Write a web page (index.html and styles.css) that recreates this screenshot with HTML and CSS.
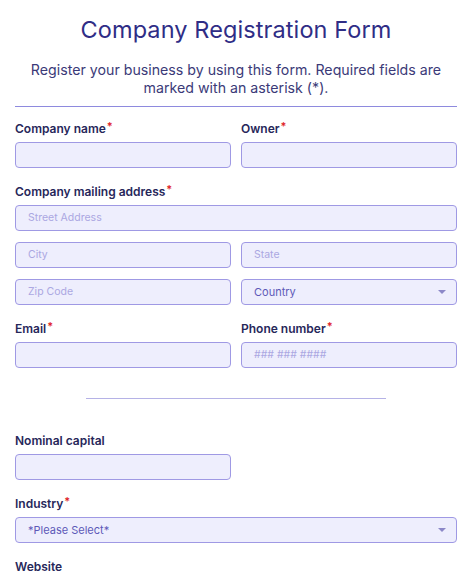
FILE: index.html
```
<!DOCTYPE html>
<html>
<head>
<meta charset="utf-8">
<link rel="stylesheet" href="styles.css">
</head>
<body>
<div class="form">
  <h1 class="title">Company Registration Form</h1>
  <p class="subtitle">Register your business by using this form. Required fields are marked with an asterisk (*).</p>
  <hr class="rule">
  <div class="row two">
    <div class="field">
      <div class="label">Company name<span class="req">*</span></div>
      <div class="input"></div>
    </div>
    <div class="field">
      <div class="label">Owner<span class="req">*</span></div>
      <div class="input"></div>
    </div>
  </div>
  <div class="field">
    <div class="label">Company mailing address<span class="req">*</span></div>
    <div class="address">
      <div class="input ph">Street Address</div>
      <div class="pair">
        <div class="input ph">City</div>
        <div class="input ph">State</div>
      </div>
      <div class="pair">
        <div class="input ph">Zip Code</div>
        <div class="input select">Country<span class="caret"></span></div>
      </div>
    </div>
  </div>
  <div class="row two">
    <div class="field">
      <div class="label">Email<span class="req">*</span></div>
      <div class="input"></div>
    </div>
    <div class="field">
      <div class="label">Phone number<span class="req">*</span></div>
      <div class="input ph">### ### ####</div>
    </div>
  </div>
  <hr class="rule short">
  <div class="row two">
    <div class="field">
      <div class="label">Nominal capital</div>
      <div class="input"></div>
    </div>
  </div>
  <div class="field">
    <div class="label">Industry<span class="req">*</span></div>
    <div class="input select">*Please Select*<span class="caret"></span></div>
  </div>
  <div class="field">
    <div class="label">Website</div>
  </div>
</div>
</body>
</html>
```
FILE: styles.css
```
html, body {
  margin: 0;
  padding: 0;
  background: #ffffff;
}
body {
  font-family: Inter, "Noto Sans", sans-serif;
}
.form {
  padding: 15px 17px 0 15px;
  display: flex;
  flex-direction: column;
}
.title {
  margin: 0;
  text-align: center;
  font-size: 23.5px;
  line-height: 30px;
  font-weight: 400;
  color: #2f2d86;
  letter-spacing: 0.1px;
}
.subtitle {
  margin: 16px 0 0;
  text-align: center;
  font-size: 14.2px;
  line-height: 18px;
  color: #3b3a78;
  padding: 0 8px;
}
.rule {
  margin: 9px 0 14px;
  border: 0;
  height: 1px;
  background: #8e8ade;
}
.rule.short {
  width: 300px;
  align-self: center;
  margin: 14px 0 34px;
  background: #b5b2e6;
}
.row.two {
  display: grid;
  grid-template-columns: 1fr 1fr;
  column-gap: 10px;
  margin-bottom: 16px;
}
.field {
  display: flex;
  flex-direction: column;
  margin-bottom: 16px;
}
.row.two .field {
  margin-bottom: 0;
}
.label {
  font-size: 12px;
  line-height: 16px;
  height: 16px;
  font-weight: 600;
  color: #27275a;
  margin-bottom: 5px;
}
.req {
  color: #e0242a;
  font-size: 11px;
  position: relative;
  top: -3px;
  margin-left: 1px;
}
.input {
  height: 24px;
  border: 1px solid #9f99e4;
  border-radius: 4px;
  background: #eeeefd;
  font-size: 10.5px;
  line-height: 24px;
  padding: 0 12px;
  position: relative;
  color: #aba7e2;
}
.input.select {
  color: #5d59b8;
  font-size: 11px;
}
.caret {
  position: absolute;
  right: 10px;
  top: 10px;
  width: 0;
  height: 0;
  border-left: 4px solid transparent;
  border-right: 4px solid transparent;
  border-top: 4px solid #8c88c8;
}
.address {
  display: flex;
  flex-direction: column;
  gap: 11px;
}
.pair {
  display: grid;
  grid-template-columns: 1fr 1fr;
  column-gap: 10px;
}
```
